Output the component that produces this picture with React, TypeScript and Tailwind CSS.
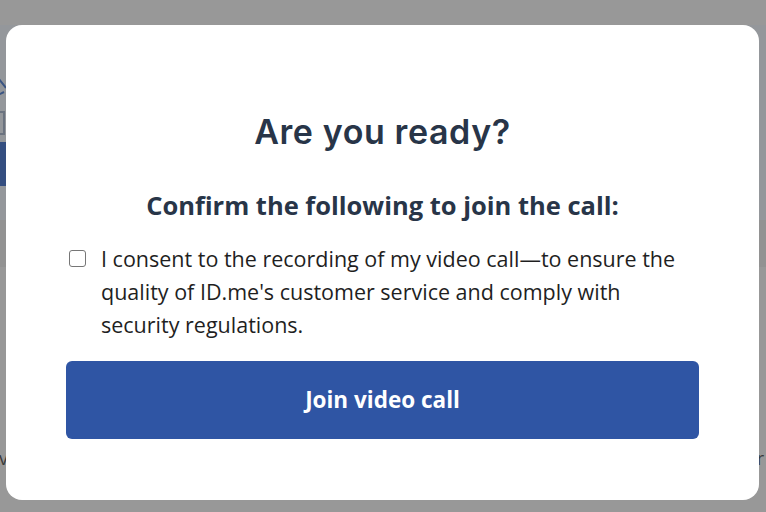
import { useState } from "react";

const App = () => {
  const [agreed, setAgreed] = useState(false);

  return (
    <div className="relative h-[512px] w-full overflow-hidden bg-[#989898] font-['Open_Sans',sans-serif]">
      {/* Page behind the overlay */}
      <div className="flex flex-col">
        <div className="h-[25px]"></div>
        <div className="h-[195px] bg-[#94979b] flex items-center">
          <svg width="14" height="130" viewBox="0 0 14 130" className="-ml-2">
            <path d="M0 12 L14 30 M0 40 L12 34" stroke="#3b5583" strokeWidth="2" fill="none" />
            <rect x="0" y="54" width="12" height="22" fill="none" stroke="#6b7380" strokeWidth="2" />
            <rect x="0" y="84" width="14" height="44" fill="#344e80" />
          </svg>
        </div>
        <div className="h-[47px] bg-[#929292]"></div>
        <div className="flex justify-between pt-[178px] text-[18px] text-[#3a3a3a]">
          <span className="-ml-[1px]">view</span>
          <span className="mr-[2px]">for</span>
        </div>
      </div>

      {/* Modal */}
      <div className="absolute left-[6px] top-[25px] w-[753px] h-[475px] rounded-[16px] bg-white px-[60px] pt-[83px]">
        <h1 className="text-center font-['Inter',sans-serif] text-[34px] font-semibold leading-[48px] tracking-[0.6px] text-[#283548]">
          Are you ready?
        </h1>
        <h2 className="mt-[33px] text-center text-[25.5px] font-bold leading-[32px] text-[#283548]">
          Confirm the following to join the call:
        </h2>
        <label className="mt-[21px] flex items-start gap-[15px] cursor-pointer">
          <input
            type="checkbox"
            checked={agreed}
            onChange={(e) => setAgreed(e.target.checked)}
            className="ml-[3px] mt-[8px] h-[17px] w-[17px] shrink-0 appearance-none rounded-[3px] border border-[#767676] bg-white checked:bg-[#2f55a4]"
          />
          <span className="text-[21.5px] leading-[33px] text-[#1f1f1f]">
            I consent to the recording of my video call—to ensure the quality of ID.me's customer service and comply with
            security regulations.
          </span>
        </label>
        <button className="mt-[20px] flex h-[78px] w-full items-center justify-center rounded-[6px] bg-[#2f55a4] text-[22.5px] font-bold text-white">
          Join video call
        </button>
      </div>
    </div>
  );
};

export default App;
